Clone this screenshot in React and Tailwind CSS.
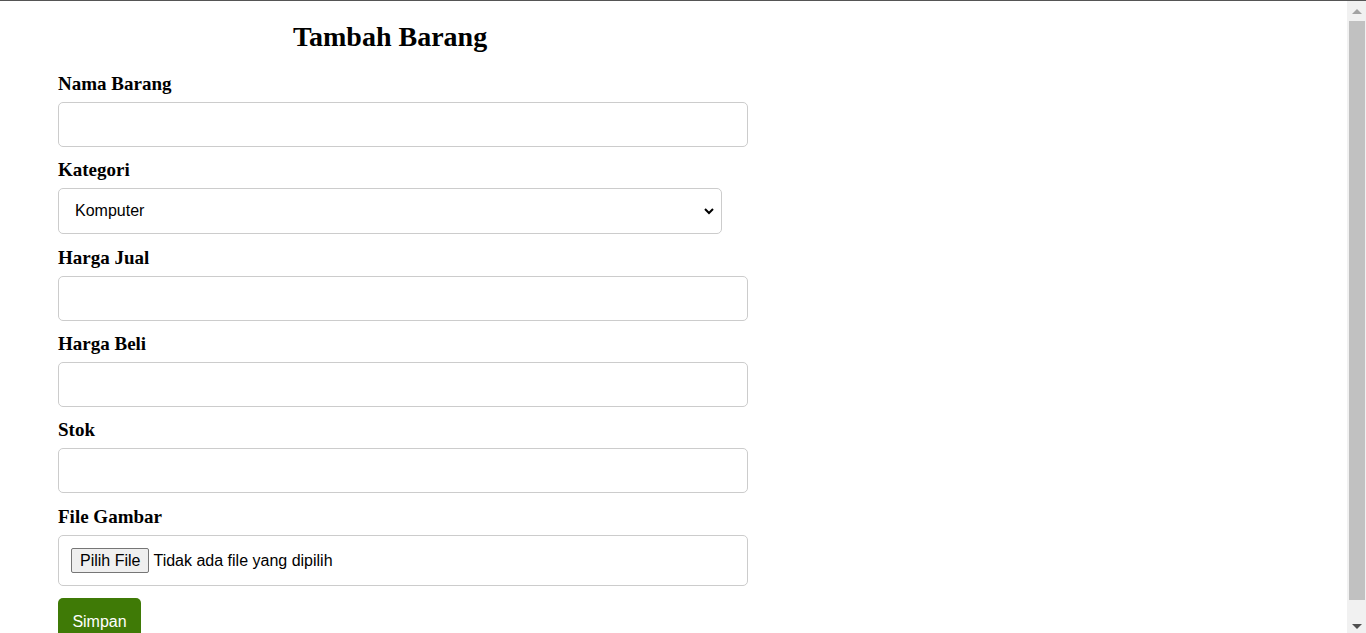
import React from 'react'

const fields = [
  { label: 'Nama Barang', type: 'text', mt: 'mt-[20px]' },
  { label: 'Kategori', type: 'select', mt: 'mt-[12px]' },
  { label: 'Harga Jual', type: 'text', mt: 'mt-[13px]' },
  { label: 'Harga Beli', type: 'text', mt: 'mt-[12px]' },
  { label: 'Stok', type: 'text', mt: 'mt-[12px]' },
]

const sans = { fontFamily: '"Liberation Sans", Arial, sans-serif' }

const Field = ({ label, type, mt }) => (
  <div className={mt}>
    <label className="block text-[19px] font-bold leading-[22px] mb-[7px]">{label}</label>
    {type === 'select' ? (
      <div className="relative w-[664px] h-[46px]">
        <select
          defaultValue="Komputer"
          className="appearance-none w-full h-full rounded-[5px] border border-[#cccccc] bg-white pl-[16px] text-[16px] text-black outline-none"
          style={sans}
        >
          <option>Komputer</option>
          <option>Laptop</option>
          <option>Aksesoris</option>
        </select>
        <svg className="absolute right-[8px] top-[19px] w-[10px] h-[8px] pointer-events-none" viewBox="0 0 10 8">
          <path d="M1 2 L5 6 L9 2" fill="none" stroke="#000" strokeWidth="2" />
        </svg>
      </div>
    ) : (
      <input type="text" className="block w-[690px] h-[45px] rounded-[5px] border border-[#cccccc] bg-white px-3 outline-none" />
    )}
  </div>
)

// static look of the classic page scrollbar
const ScrollBar = () => (
  <div className="w-[19px] shrink-0 flex flex-col bg-[#f1f1f1] pl-[2px] pr-[1px]">
    <div className="h-[20px] flex justify-center pt-[8px] pr-[1px]">
      <svg width="10" height="5" viewBox="0 0 10 5">
        <path d="M0 5 L5 0 L10 5 Z" fill="#a3a3a3" />
      </svg>
    </div>
    <div className="h-[579px] bg-[#c1c1c1]" />
    <div className="flex-1 flex justify-center items-end pb-[4px] pr-[1px]">
      <svg width="10" height="5" viewBox="0 0 10 5">
        <path d="M0 0 L10 0 L5 5 Z" fill="#505050" />
      </svg>
    </div>
  </div>
)

export default function App() {
  return (
    <div className="flex h-[633px] border-t border-[#555555] bg-white text-black overflow-hidden" style={{ fontFamily: '"Liberation Serif", "Times New Roman", serif' }}>
      <div className="flex-1 overflow-hidden">
        <form className="w-[664px] ml-[58px] pb-[12px]" onSubmit={(e) => e.preventDefault()}>
          <h2 className="text-center text-[28px] font-bold leading-[32px] pt-[20px]">Tambah Barang</h2>
          {fields.map((f) => (
            <Field key={f.label} {...f} />
          ))}
          <div className="mt-[13px]">
            <label className="block text-[19px] font-bold leading-[22px] mb-[7px]">File Gambar</label>
            <div
              className="flex items-center w-[690px] h-[51px] rounded-[5px] border border-[#cccccc] bg-white pl-[12px] text-[16px]"
              style={sans}
            >
              <span className="inline-flex items-center h-[25px] px-[8px] border border-[#767676] rounded-[2px] bg-[#efefef] mr-[4px]">Pilih File</span>
              <span>Tidak ada file yang dipilih</span>
            </div>
          </div>
          <button
            type="submit"
            className="block mt-[12px] w-[83px] h-[48px] rounded-[5px] bg-[#3f7a06] text-white text-[16px]"
            style={sans}
          >
            Simpan
          </button>
        </form>
      </div>
      <ScrollBar />
    </div>
  )
}
